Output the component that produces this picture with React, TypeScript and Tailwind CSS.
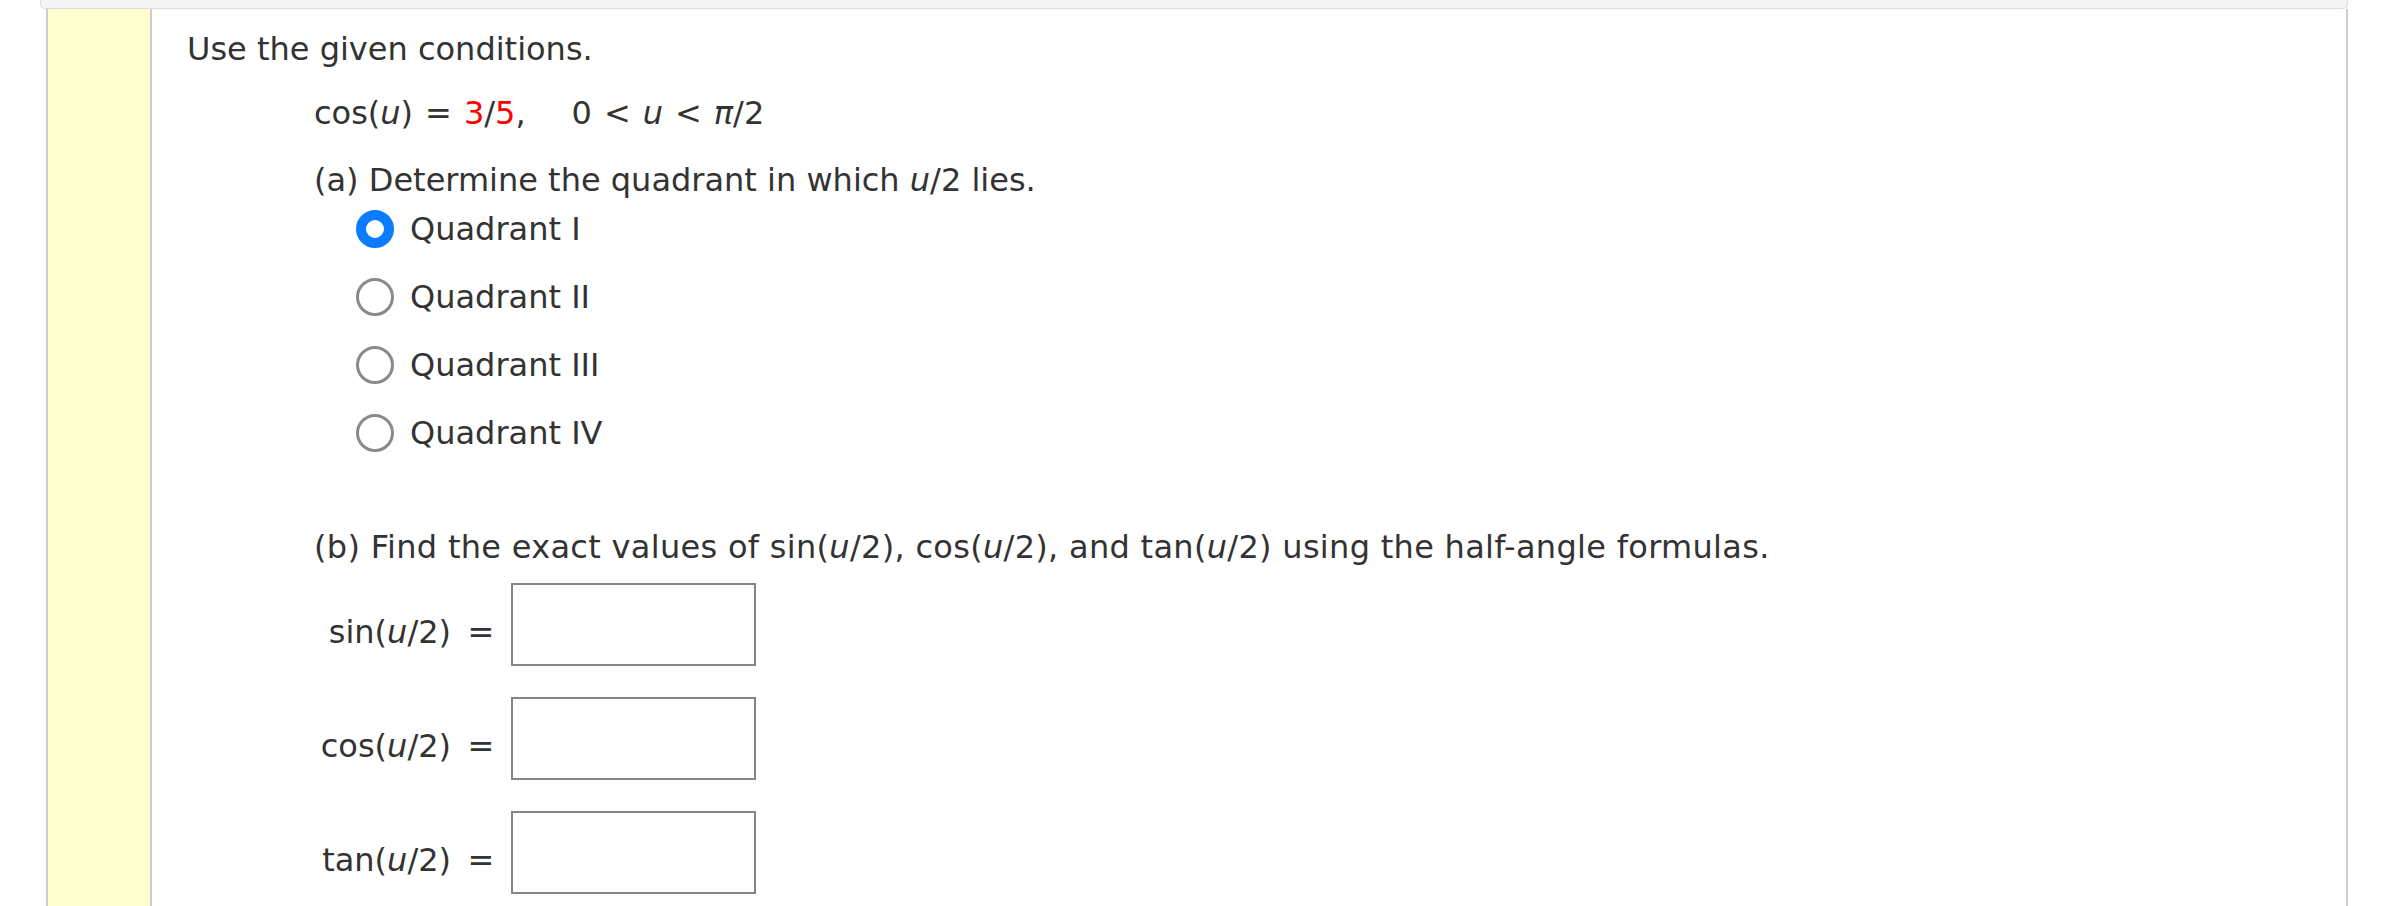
import React from 'react';

const quadrants = ['Quadrant I', 'Quadrant II', 'Quadrant III', 'Quadrant IV'];

function Radio({ checked }: { checked: boolean }) {
  return checked ? (
    <span className="block w-[38px] h-[38px] rounded-full border-[10px] border-[#0b7bff] bg-white shrink-0" />
  ) : (
    <span className="block w-[38px] h-[38px] rounded-full border-[3px] border-[#8a8a8a] bg-white shrink-0" />
  );
}

function AnswerRow({ fn }: { fn: string }) {
  return (
    <div className="flex items-center">
      <span className="w-[137px] text-right mt-[14px] whitespace-nowrap">
        {fn}(<i>u</i>/2)
      </span>
      <span className="w-[60px] text-center mt-[14px]">=</span>
      <div className="w-[245px] h-[83px] border-2 border-[#858585] bg-white" />
    </div>
  );
}

export default function App() {
  return (
    <main className="min-h-screen bg-white font-['DejaVu_Sans',Verdana,sans-serif] text-[32px] leading-[40px] text-[#333]">
      <div className="ml-[40px] w-[2308px] h-[9px] bg-[#f5f5f5] border-x border-b border-[#dcdcdc] rounded-b-[5px]" />
      <div className="ml-[46px] w-[2302px] h-[897px] flex">
        <div className="w-[106px] bg-[#ffffd1] border-x-2 border-[#cdcdcd]" />
        <div className="flex-1 border-r-2 border-[#cccccc] pl-[35px] pt-[20px]">
          <p>Use the given conditions.</p>

          <div className="pl-[127px]">
            <p className="mt-[24px] whitespace-nowrap">
              cos(<i>u</i>)<span className="px-[12px]">=</span>
              <span className="text-[#ff0000]">3</span>/<span className="text-[#ff0000]">5</span>,
              <span className="inline-block w-[46px]" />
              0<span className="px-[12px]">&lt;</span>
              <i>u</i>
              <span className="px-[12px]">&lt;</span>
              <i>π</i>/2
            </p>

            <p className="mt-[27px]">
              (a) Determine the quadrant in which <i>u</i>/2 lies.
            </p>

            <div className="mt-[9px] pl-[42px] flex flex-col gap-[28px]">
              {quadrants.map((q, i) => (
                <label key={q} className="flex items-center h-[40px] gap-[16px]">
                  <Radio checked={i === 0} />
                  <span>{q}</span>
                </label>
              ))}
            </div>

            <p className="mt-[74px] tracking-[0.3px]">
              (b) Find the exact values of sin(<i>u</i>/2), cos(<i>u</i>/2), and tan(<i>u</i>/2) using the half-angle formulas.
            </p>

            <div className="mt-[16px] flex flex-col gap-[31px]">
              <AnswerRow fn="sin" />
              <AnswerRow fn="cos" />
              <AnswerRow fn="tan" />
            </div>
          </div>
        </div>
      </div>
    </main>
  );
}
